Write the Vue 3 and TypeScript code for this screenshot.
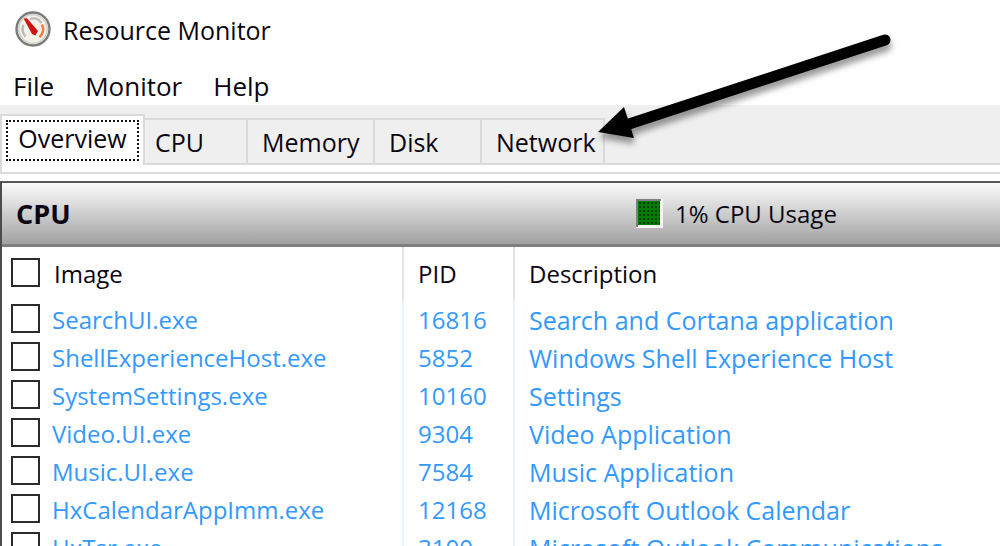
<script setup lang="ts">
import { ref } from 'vue'

interface Process {
  image: string
  pid: number
  description: string
  checked: boolean
}

const menus: string[] = ['File', 'Monitor', 'Help']

const tabs: string[] = ['Overview', 'CPU', 'Memory', 'Disk', 'Network']
const activeTab = ref<string>('Overview')

const allChecked = ref<boolean>(false)
const processes = ref<Process[]>([
  { image: 'SearchUI.exe', pid: 16816, description: 'Search and Cortana application', checked: false },
  { image: 'ShellExperienceHost.exe', pid: 5852, description: 'Windows Shell Experience Host', checked: false },
  { image: 'SystemSettings.exe', pid: 10160, description: 'Settings', checked: false },
  { image: 'Video.UI.exe', pid: 9304, description: 'Video Application', checked: false },
  { image: 'Music.UI.exe', pid: 7584, description: 'Music Application', checked: false },
  { image: 'HxCalendarAppImm.exe', pid: 12168, description: 'Microsoft Outlook Calendar', checked: false },
  { image: 'HxTsr.exe', pid: 3100, description: 'Microsoft Outlook Communications', checked: false },
])

function toggleAll(): void {
  processes.value.forEach((p) => (p.checked = allChecked.value))
}
</script>

<template>
  <div class="window">
    <header class="titlebar">
      <svg class="app-icon" viewBox="0 0 36 36" aria-hidden="true">
        <circle cx="18" cy="18" r="16.5" fill="#f4f1ea" stroke="#7c7c7c" stroke-width="2.4" />
        <circle cx="18" cy="18" r="14.2" fill="none" stroke="#d3d1cc" stroke-width="1.6" />
        <path d="M10.5 25.5A10.5 10.5 0 0 1 8.500 14" fill="none" stroke="#b9bbb6" stroke-width="2.4" />
        <path d="M15 8A10.5 10.5 0 0 1 26.5 12" fill="none" stroke="#b9bbb6" stroke-width="2.2" />
        <path d="M27 13.5A10.5 10.5 0 0 1 24.5 26" fill="none" stroke="#ee7a45" stroke-width="2.6" />
        <path d="M8.6 7.4 12 7.200 23 20 20.4 24.4 17 23Z" fill="#cf1414" />
      </svg>
      <h1 class="title">Resource Monitor</h1>
    </header>

    <nav class="menubar" aria-label="Menu">
      <button v-for="menu in menus" :key="menu" type="button" class="menu">{{ menu }}</button>
    </nav>

    <div class="tabstrip" role="tablist">
      <button
        v-for="tab in tabs"
        :key="tab"
        type="button"
        role="tab"
        class="tab"
        :class="['tab-' + tab.toLowerCase(), { active: tab === activeTab }]"
        :aria-selected="tab === activeTab"
        @click="activeTab = tab"
      >
        <span class="tab-label">{{ tab }}</span>
      </button>
    </div>
    <div class="page-edge"></div>

    <section class="panel">
      <div class="panel-head">
        <h2 class="panel-title">CPU</h2>
        <div class="usage">
          <svg class="meter" viewBox="0 0 27 29" aria-hidden="true">
            <defs>
              <pattern id="meter-grid" x="2" y="2" width="4" height="4" patternUnits="userSpaceOnUse">
                <rect width="4" height="4" fill="#007d00" />
                <rect x="1" y="1" width="2" height="2" fill="#003c00" />
              </pattern>
            </defs>
            <rect width="27" height="29" fill="#f6f6f6" />
            <path d="M0 0H25V2H2V28H0Z" fill="#808080" />
            <rect x="2" y="2" width="22" height="24" fill="url(#meter-grid)" />
          </svg>
          <span>1% CPU Usage</span>
        </div>
      </div>

      <table class="grid">
        <colgroup>
          <col class="col-image" />
          <col class="col-pid" />
          <col />
        </colgroup>
        <thead>
          <tr>
            <th scope="col">
              <label class="pick">
                <input v-model="allChecked" type="checkbox" class="box" @change="toggleAll" />
                <span>Image</span>
              </label>
            </th>
            <th scope="col">PID</th>
            <th scope="col">Description</th>
          </tr>
        </thead>
        <tbody>
          <tr v-for="p in processes" :key="p.pid">
            <td>
              <label class="pick">
                <input v-model="p.checked" type="checkbox" class="box" />
                <span>{{ p.image }}</span>
              </label>
            </td>
            <td>{{ p.pid }}</td>
            <td class="description">{{ p.description }}</td>
          </tr>
        </tbody>
      </table>
    </section>

    <svg class="arrow" viewBox="0 0 320 130" aria-hidden="true">
      <g class="arrow-shape">
        <path d="M295 20 36 105" stroke="#000" stroke-width="11" stroke-linecap="round" />
        <path d="M8 112 34 87 44 118Z" fill="#000" />
      </g>
    </svg>
  </div>
</template>

<style>
body {
  margin: 0;
  background: #fff;
}
</style>

<style scoped>
.window {
  position: relative;
  display: flex;
  flex-direction: column;
  height: 100vh;
  overflow: hidden;
  background: #fff;
  color: #0a0510;
  font-family: "Open Sans", "Noto Sans", sans-serif;
  font-size: 25px;
  line-height: 36px;
}

h1,
h2 {
  margin: 0;
}

button {
  margin: 0;
  padding: 0;
  border: 0;
  background: none;
  color: inherit;
  font: inherit;
  white-space: nowrap;
}

.titlebar {
  flex: none;
  display: flex;
  align-items: center;
  gap: 12px;
  height: 58px;
  padding-left: 15px;
}

.app-icon {
  width: 36px;
  height: 36px;
}

.title {
  padding-top: 2px;
  font-size: 25px;
  font-weight: 400;
}

.menubar {
  flex: none;
  display: flex;
  align-items: center;
  gap: 31px;
  height: 47px;
  padding: 8px 0 0 13px;
  box-sizing: border-box;
  font-size: 26px;
}

.tabstrip {
  flex: none;
  display: flex;
  align-items: flex-end;
  height: 60px;
  box-sizing: border-box;
  background: #efefef;
  border-bottom: 2px solid #dadada;
}

.tab {
  display: flex;
  align-items: center;
  height: 45px;
  box-sizing: border-box;
  border-top: 2px solid #dadada;
  border-right: 2px solid #dadada;
  padding-left: 14px;
}

.tab-overview {
  width: 145px;
}

.tab-cpu {
  width: 103px;
  padding-left: 10px;
}

.tab-memory {
  width: 127px;
}

.tab-disk {
  width: 107px;
}

.tab-network {
  width: 123px;
}

.tab.active {
  height: 51px;
  margin-bottom: -2px;
  padding: 4px;
  align-items: stretch;
  border-left: 2px solid #dadada;
  background: #fff;
}

.tab.active .tab-label {
  flex: 1;
  border: 2px dotted #111;
  line-height: 32px;
}

.page-edge {
  flex: none;
  height: 7px;
  border-bottom: 2px solid #dadada;
  border-left: 2px solid #dadada;
}

.panel {
  flex: 1;
  min-height: 0;
  margin-top: 7px;
  border-top: 2px solid #585858;
  border-left: 2px solid #4c4c4c;
  overflow: hidden;
}

.panel-head {
  display: flex;
  align-items: center;
  height: 61px;
  border-bottom: 3px solid #7f7f7f;
  background: linear-gradient(#fbfbfb, #a1a1a1);
}

.panel-title {
  width: 634px;
  box-sizing: border-box;
  padding-left: 14px;
  font-size: 27px;
  font-weight: 700;
}

.usage {
  display: flex;
  align-items: center;
  gap: 12px;
  font-size: 24px;
}

.meter {
  width: 27px;
  height: 29px;
}

.grid {
  width: 100%;
  table-layout: fixed;
  border-collapse: collapse;
  font-size: 24px;
}

.col-image {
  width: 401px;
}

.col-pid {
  width: 111px;
}

th,
td {
  padding: 0 0 0 14px;
  text-align: left;
  white-space: nowrap;
  font-weight: 400;
}

th {
  height: 54px;
}

td {
  height: 38px;
  color: #3399ff;
}

.description {
  font-size: 25px;
}

th:first-child,
td:first-child {
  padding-left: 9px;
}

th:not(:last-child) {
  border-right: 2px solid #e4e4e4;
}

td:not(:last-child) {
  border-right: 2px solid #e8f3ff;
}

.pick {
  display: flex;
  align-items: center;
  gap: 12px;
}

th .pick {
  gap: 14px;
}

.box {
  flex: none;
  appearance: none;
  width: 29px;
  height: 29px;
  margin: 0 0 3px;
  border: 2px solid #2b2b2b;
  background: #fff;
}

.box:checked {
  background: #3399ff;
}

.arrow {
  position: absolute;
  top: 20px;
  left: 590px;
  width: 320px;
  height: 130px;
  overflow: visible;
  pointer-events: none;
}

.arrow-shape {
  filter: drop-shadow(1px 6px 3px rgba(0, 0, 0, 0.4));
}
</style>
